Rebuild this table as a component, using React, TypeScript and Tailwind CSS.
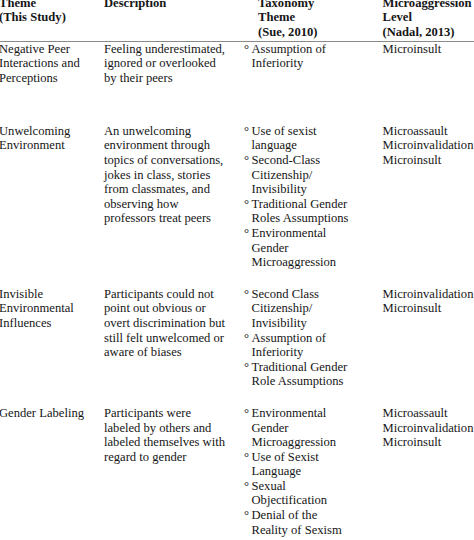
import React from "react";

type Row = {
  theme: string[];
  desc: string[];
  taxonomy: string[][];
  level: string[];
  pad: string;
};

const rows: Row[] = [
  {
    theme: ["Negative Peer", "Interactions and", "Perceptions"],
    desc: ["Feeling underestimated,", "ignored or overlooked", "by their peers"],
    taxonomy: [["Assumption of", "Inferiority"]],
    level: ["Microinsult"],
    pad: "pb-[38.5px]",
  },
  {
    theme: ["Unwelcoming", "Environment"],
    desc: [
      "An unwelcoming",
      "environment through",
      "topics of conversations,",
      "jokes in class, stories",
      "from classmates, and",
      "observing how",
      "professors treat peers",
    ],
    taxonomy: [
      ["Use of sexist", "language"],
      ["Second-Class", "Citizenship/", "Invisibility"],
      ["Traditional Gender", "Roles Assumptions"],
      ["Environmental", "Gender", "Microaggression"],
    ],
    level: ["Microassault", "Microinvalidation", "Microinsult"],
    pad: "pb-[17px]",
  },
  {
    theme: ["Invisible", "Environmental", "Influences"],
    desc: [
      "Participants could not",
      "point out obvious or",
      "overt discrimination but",
      "still felt unwelcomed or",
      "aware of biases",
    ],
    taxonomy: [
      ["Second Class", "Citizenship/", "Invisibility"],
      ["Assumption of", "Inferiority"],
      ["Traditional Gender", "Role Assumptions"],
    ],
    level: ["Microinvalidation", "Microinsult"],
    pad: "pb-[17px]",
  },
  {
    theme: ["Gender Labeling"],
    desc: [
      "Participants were",
      "labeled by others and",
      "labeled themselves with",
      "regard to gender",
    ],
    taxonomy: [
      ["Environmental", "Gender", "Microaggression"],
      ["Use of Sexist", "Language"],
      ["Sexual", "Objectification"],
      ["Denial of the", "Reality of Sexism"],
    ],
    level: ["Microassault", "Microinvalidation", "Microinsult"],
    pad: "pb-[17px]",
  },
];

function Lines({ lines }: { lines: string[] }) {
  return (
    <div>
      {lines.map((l, i) => (
        <div key={i} className="whitespace-nowrap">
          {l}
        </div>
      ))}
    </div>
  );
}

export default function App() {
  return (
    <div className="h-[540px] w-[474px] overflow-hidden bg-white">
      <div
        className="-ml-px -mt-[4.25px] text-[12.6px] leading-[14.6px] text-[#161616]"
        style={{ fontFamily: '"Liberation Serif", "Times New Roman", serif' }}
      >
        {/* header */}
        <div className="grid grid-cols-[105px_140px_138.5px_1fr] border-b border-[#8a8a8a] pb-px font-bold">
          <Lines lines={["Theme", "(This Study)"]} />
          <Lines lines={["Description"]} />
          <div className="pl-[14px]">
            <Lines lines={["Taxonomy", "Theme", "(Sue, 2010)"]} />
          </div>
          <Lines lines={["Microaggression", "Level", "(Nadal, 2013)"]} />
        </div>

        {rows.map((r, i) => (
          <div key={i} className={`grid grid-cols-[105px_140px_138.5px_1fr] ${r.pad}`}>
            <Lines lines={r.theme} />
            <Lines lines={r.desc} />
            <div>
              {r.taxonomy.map((item, j) => (
                <div key={j} className="flex">
                  <span className="w-[7.5px] shrink-0">°</span>
                  <Lines lines={item} />
                </div>
              ))}
            </div>
            <Lines lines={r.level} />
          </div>
        ))}
      </div>
    </div>
  );
}
